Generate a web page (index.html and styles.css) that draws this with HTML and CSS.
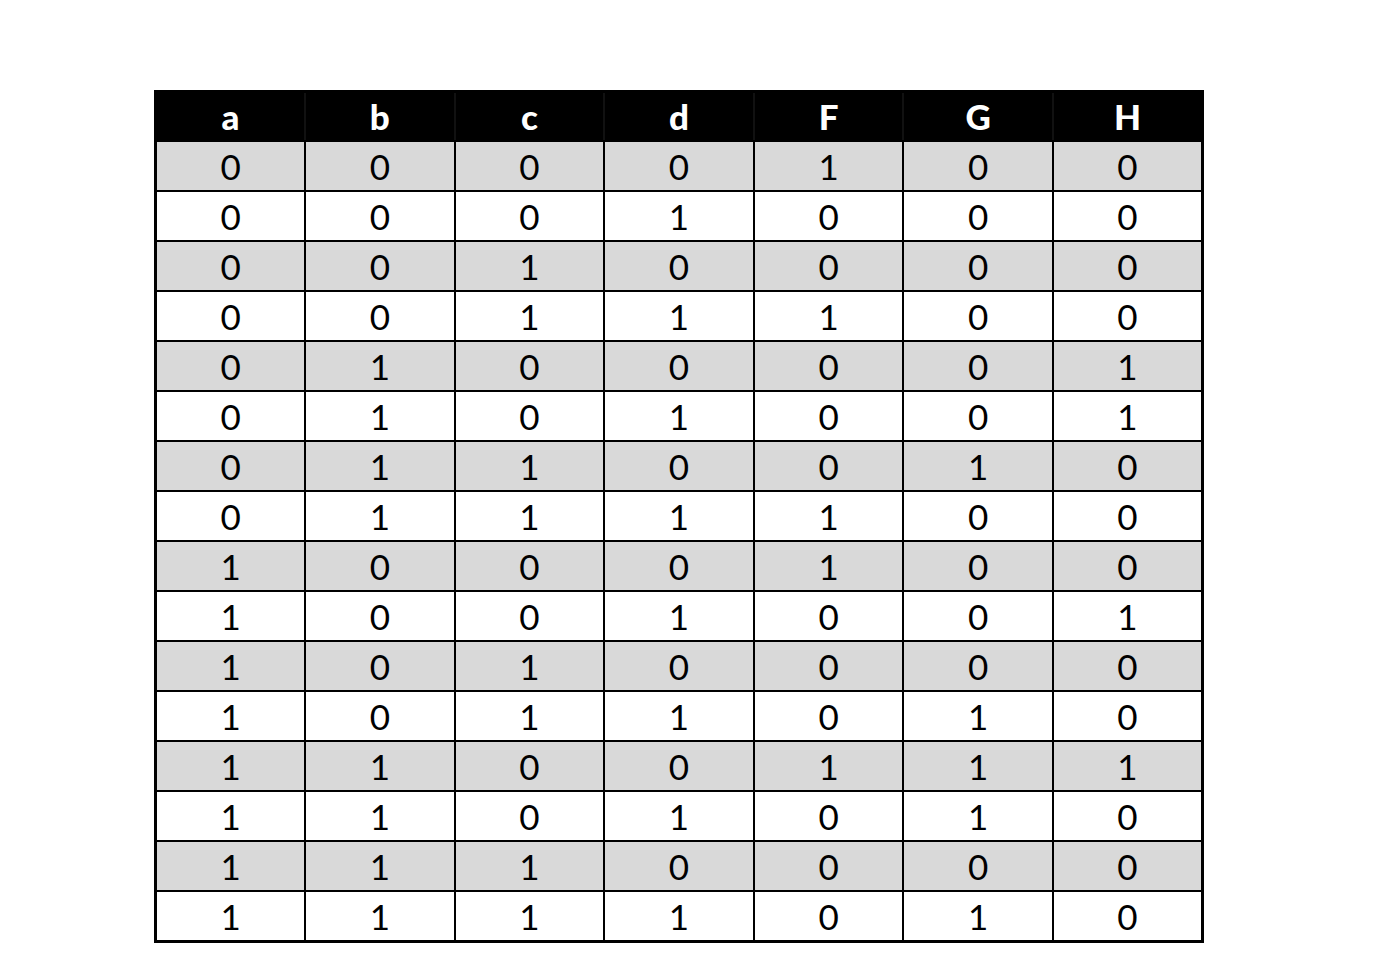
FILE: index.html
```html
<!DOCTYPE html>
<html>
<head>
<meta charset="utf-8">
<link rel="stylesheet" href="styles.css">
</head>
<body>
<div class="page">
<table class="truth">
<thead>
<tr><th>a</th><th>b</th><th>c</th><th>d</th><th>F</th><th>G</th><th>H</th></tr>
</thead>
<tbody>
<tr><td>0</td><td>0</td><td>0</td><td>0</td><td>1</td><td>0</td><td>0</td></tr>
<tr><td>0</td><td>0</td><td>0</td><td>1</td><td>0</td><td>0</td><td>0</td></tr>
<tr><td>0</td><td>0</td><td>1</td><td>0</td><td>0</td><td>0</td><td>0</td></tr>
<tr><td>0</td><td>0</td><td>1</td><td>1</td><td>1</td><td>0</td><td>0</td></tr>
<tr><td>0</td><td>1</td><td>0</td><td>0</td><td>0</td><td>0</td><td>1</td></tr>
<tr><td>0</td><td>1</td><td>0</td><td>1</td><td>0</td><td>0</td><td>1</td></tr>
<tr><td>0</td><td>1</td><td>1</td><td>0</td><td>0</td><td>1</td><td>0</td></tr>
<tr><td>0</td><td>1</td><td>1</td><td>1</td><td>1</td><td>0</td><td>0</td></tr>
<tr><td>1</td><td>0</td><td>0</td><td>0</td><td>1</td><td>0</td><td>0</td></tr>
<tr><td>1</td><td>0</td><td>0</td><td>1</td><td>0</td><td>0</td><td>1</td></tr>
<tr><td>1</td><td>0</td><td>1</td><td>0</td><td>0</td><td>0</td><td>0</td></tr>
<tr><td>1</td><td>0</td><td>1</td><td>1</td><td>0</td><td>1</td><td>0</td></tr>
<tr><td>1</td><td>1</td><td>0</td><td>0</td><td>1</td><td>1</td><td>1</td></tr>
<tr><td>1</td><td>1</td><td>0</td><td>1</td><td>0</td><td>1</td><td>0</td></tr>
<tr><td>1</td><td>1</td><td>1</td><td>0</td><td>0</td><td>0</td><td>0</td></tr>
<tr><td>1</td><td>1</td><td>1</td><td>1</td><td>0</td><td>1</td><td>0</td></tr>
</tbody>
</table>
</div>
</body>
</html>
```
FILE: styles.css
```css
html, body {
  margin: 0;
  padding: 0;
  background: #ffffff;
}
.page {
  padding: 90px 0 0 154px;
}
.truth {
  border-collapse: collapse;
  table-layout: fixed;
  width: 1050px;
  font-family: "Lato", "Open Sans", sans-serif;
  font-size: 35px;
  color: #000;
  border: 3px solid #000;
}
.truth th,
.truth td {
  height: 48px;
  padding: 0;
  text-align: center;
  vertical-align: middle;
  border: 2.5px solid #000;
  line-height: 1;
}
.truth th {
  height: 47px;
  background: #000;
  color: #fff;
  font-weight: 900;
  border-left-color: #111;
  border-right-color: #111;
}
.truth tbody tr:nth-child(odd) td {
  background: #d9d9d9;
}
.truth tbody tr:nth-child(even) td {
  background: #ffffff;
}
```
